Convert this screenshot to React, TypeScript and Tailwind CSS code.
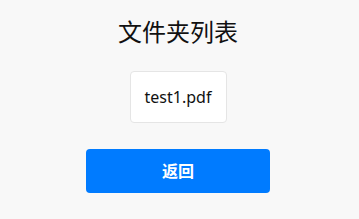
export default function App() {
  return (
    <div
      className="min-h-screen bg-[#f8f8f8] flex flex-col items-center pt-[16px] pr-[3px]"
      style={{ fontFamily: '"Noto Sans", "Noto Sans CJK SC", sans-serif' }}
    >
      <h1 className="text-[24px] leading-[32px] text-[#111] font-normal">文件夹列表</h1>
      <div className="mt-[23px] w-[97px] h-[52px] bg-white border border-[#e5e5e5] rounded-[4px] flex items-center justify-center text-[16px] text-[#111]">
        test1.pdf
      </div>
      <button className="mt-[26px] w-[184px] h-[44px] rounded-[4px] bg-[#007bff] text-white text-[16px] font-bold">
        返回
      </button>
    </div>
  )
}
